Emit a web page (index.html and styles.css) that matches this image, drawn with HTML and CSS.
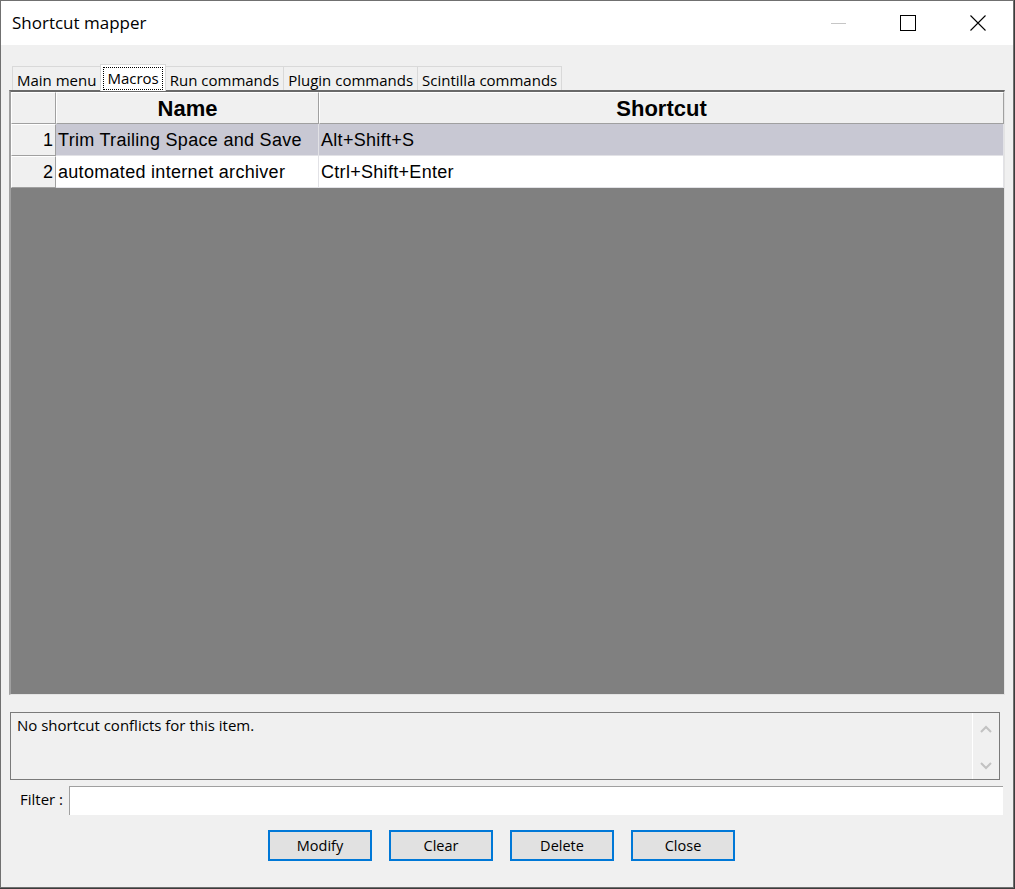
FILE: index.html
```html
<!DOCTYPE html>
<html lang="en">
<head>
    <meta charset="UTF-8">
    <meta name="viewport" content="width=device-width, initial-scale=1.0">
    <title>Shortcut mapper</title>
    <link rel="stylesheet" href="styles.css">
</head>
<body>
    <div class="window">
        <div class="titlebar">
            <span class="title">Shortcut mapper</span>
            <div class="caption-buttons">
                <span class="cap-btn">
                    <svg width="16" height="16" viewBox="0 0 16 16"><path d="M1 8.5h15" stroke="#c6c6c6" stroke-width="1"/></svg>
                </span>
                <span class="cap-btn">
                    <svg width="16" height="16" viewBox="0 0 16 16"><rect x="0.5" y="0.5" width="15" height="15" fill="none" stroke="#000" stroke-width="1"/></svg>
                </span>
                <span class="cap-btn">
                    <svg width="16" height="16" viewBox="0 0 16 16"><path d="M0.5 0.5L15.5 15.5M15.5 0.5L0.5 15.5" stroke="#000" stroke-width="1.1"/></svg>
                </span>
            </div>
        </div>

        <div class="content">
            <div class="tabs">
                <div class="tab">Main menu</div>
                <div class="tab active"><span class="focus">Macros</span></div>
                <div class="tab">Run commands</div>
                <div class="tab">Plugin commands</div>
                <div class="tab">Scintilla commands</div>
            </div>

            <div class="grid">
                <div class="hcell"></div>
                <div class="hcell col-title">Name</div>
                <div class="hcell col-title">Shortcut</div>

                <div class="hcell row-num">1</div>
                <div class="cell selected">Trim Trailing Space and Save</div>
                <div class="cell selected">Alt+Shift+S</div>

                <div class="hcell row-num">2</div>
                <div class="cell">automated internet archiver</div>
                <div class="cell">Ctrl+Shift+Enter</div>
            </div>

            <div class="conflicts">
                <div class="conflicts-text">No shortcut conflicts for this item.</div>
                <div class="scrollbar">
                    <svg width="12" height="8" viewBox="0 0 12 8"><path d="M1 7L6 2L11 7" fill="none" stroke="#c2c2c2" stroke-width="2"/></svg>
                    <svg width="12" height="8" viewBox="0 0 12 8"><path d="M1 1L6 6L11 1" fill="none" stroke="#c2c2c2" stroke-width="2"/></svg>
                </div>
            </div>

            <div class="filter-row">
                <label for="filter">Filter :</label>
                <input id="filter" type="text">
            </div>

            <div class="buttons">
                <button type="button">Modify</button>
                <button type="button">Clear</button>
                <button type="button">Delete</button>
                <button type="button">Close</button>
            </div>
        </div>
    </div>
</body>
</html>
```

FILE: styles.css
```css
body {
    margin: 0;
    padding: 0;
    background-color: #3c3c3c;
    font-family: "Open Sans", "Noto Sans", sans-serif;
    color: #000;
}

.window {
    width: 1014px;
    height: 888px;
    box-sizing: border-box;
    border: 1px solid #707070;
    background-color: #f0f0f0;
    display: flex;
    flex-direction: column;
}

.titlebar {
    height: 44px;
    background-color: #fff;
    display: flex;
    align-items: center;
    justify-content: space-between;
}

.title {
    font-size: 17px;
    padding-left: 11px;
    padding-bottom: 2px;
}

.caption-buttons {
    display: flex;
    height: 100%;
}

.cap-btn {
    width: 70px;
    display: flex;
    align-items: center;
    justify-content: center;
}

.cap-btn svg {
    display: block;
}

.content {
    flex: 1;
    padding-left: 8px;
}

/* tabs */
.tabs {
    display: flex;
    align-items: flex-end;
    height: 26px;
    margin-top: 19px;
    padding-left: 4px;
}

.tab {
    height: 24px;
    box-sizing: border-box;
    padding: 2px 4px 0;
    border: 1px solid #d9d9d9;
    border-bottom: none;
    margin-left: -1px;
    font-size: 15px;
    line-height: 22px;
    white-space: nowrap;
}

.tab.active {
    height: 27px;
    margin-bottom: -1px;
    padding: 2px 2px 0;
    background-color: #fff;
    position: relative;
}

.focus {
    display: block;
    border: 1px dotted #000;
    padding: 0 3px;
    line-height: 21px;
}

/* grid */
.grid {
    width: 996px;
    height: 605px;
    box-sizing: border-box;
    border-style: solid;
    border-width: 2px 1px 1px 2px;
    border-color: #696969 #e3e3e3 #e3e3e3 #a0a0a0;
    background-color: #808080;
    display: grid;
    grid-template-columns: 45px 263px 1fr;
    grid-auto-rows: 32px;
    align-content: start;
    font-family: "Liberation Sans", Arial, sans-serif;
    font-size: 18px;
}

.hcell {
    background-color: #f0f0f0;
    border: 1px solid;
    border-color: #fff #a0a0a0 #a0a0a0 #fff;
    display: flex;
    align-items: center;
    padding-top: 1px;
}

.col-title {
    justify-content: center;
    font-weight: bold;
    font-size: 22px;
}

.row-num {
    justify-content: flex-end;
    padding-right: 2px;
}

.cell {
    background-color: #fff;
    border-right: 1px solid #e2e2e6;
    border-bottom: 1px solid #e2e2e6;
    display: flex;
    align-items: center;
    padding: 1px 0 0 2px;
    letter-spacing: 0.3px;
    white-space: nowrap;
}

.cell.selected {
    background-color: #c8c8d3;
}

/* conflicts box */
.conflicts {
    width: 990px;
    height: 68px;
    box-sizing: border-box;
    margin: 17px 0 0 1px;
    border: 1px solid #7a7a7a;
    display: flex;
}

.conflicts-text {
    flex: 1;
    font-size: 15px;
    padding: 2px 6px;
}

.scrollbar {
    width: 26px;
    border-left: 1px solid #fff;
    display: flex;
    flex-direction: column;
    justify-content: space-between;
    align-items: center;
    padding: 12px 0 9px;
}

.scrollbar svg {
    display: block;
}

/* filter */
.filter-row {
    display: flex;
    align-items: center;
    margin-top: 6px;
    height: 29px;
}

.filter-row label {
    font-size: 15px;
    padding: 0 0 4px 11px;
    box-sizing: border-box;
    width: 60px;
}

.filter-row input {
    width: 934px;
    height: 29px;
    box-sizing: border-box;
    border: none;
    border-top: 1px solid #a0a0a0;
    border-left: 1px solid #a0a0a0;
    background-color: #fff;
    outline: none;
    padding: 0 4px;
    font-family: inherit;
}

/* buttons */
.buttons {
    display: flex;
    gap: 17px;
    margin-top: 15px;
    padding-left: 259px;
}

.buttons button {
    width: 104px;
    height: 31px;
    box-sizing: border-box;
    border: 2px solid #0078d7;
    background-color: #e1e1e1;
    font-family: inherit;
    font-size: 14.5px;
    color: #000;
    padding: 0;
}
```
